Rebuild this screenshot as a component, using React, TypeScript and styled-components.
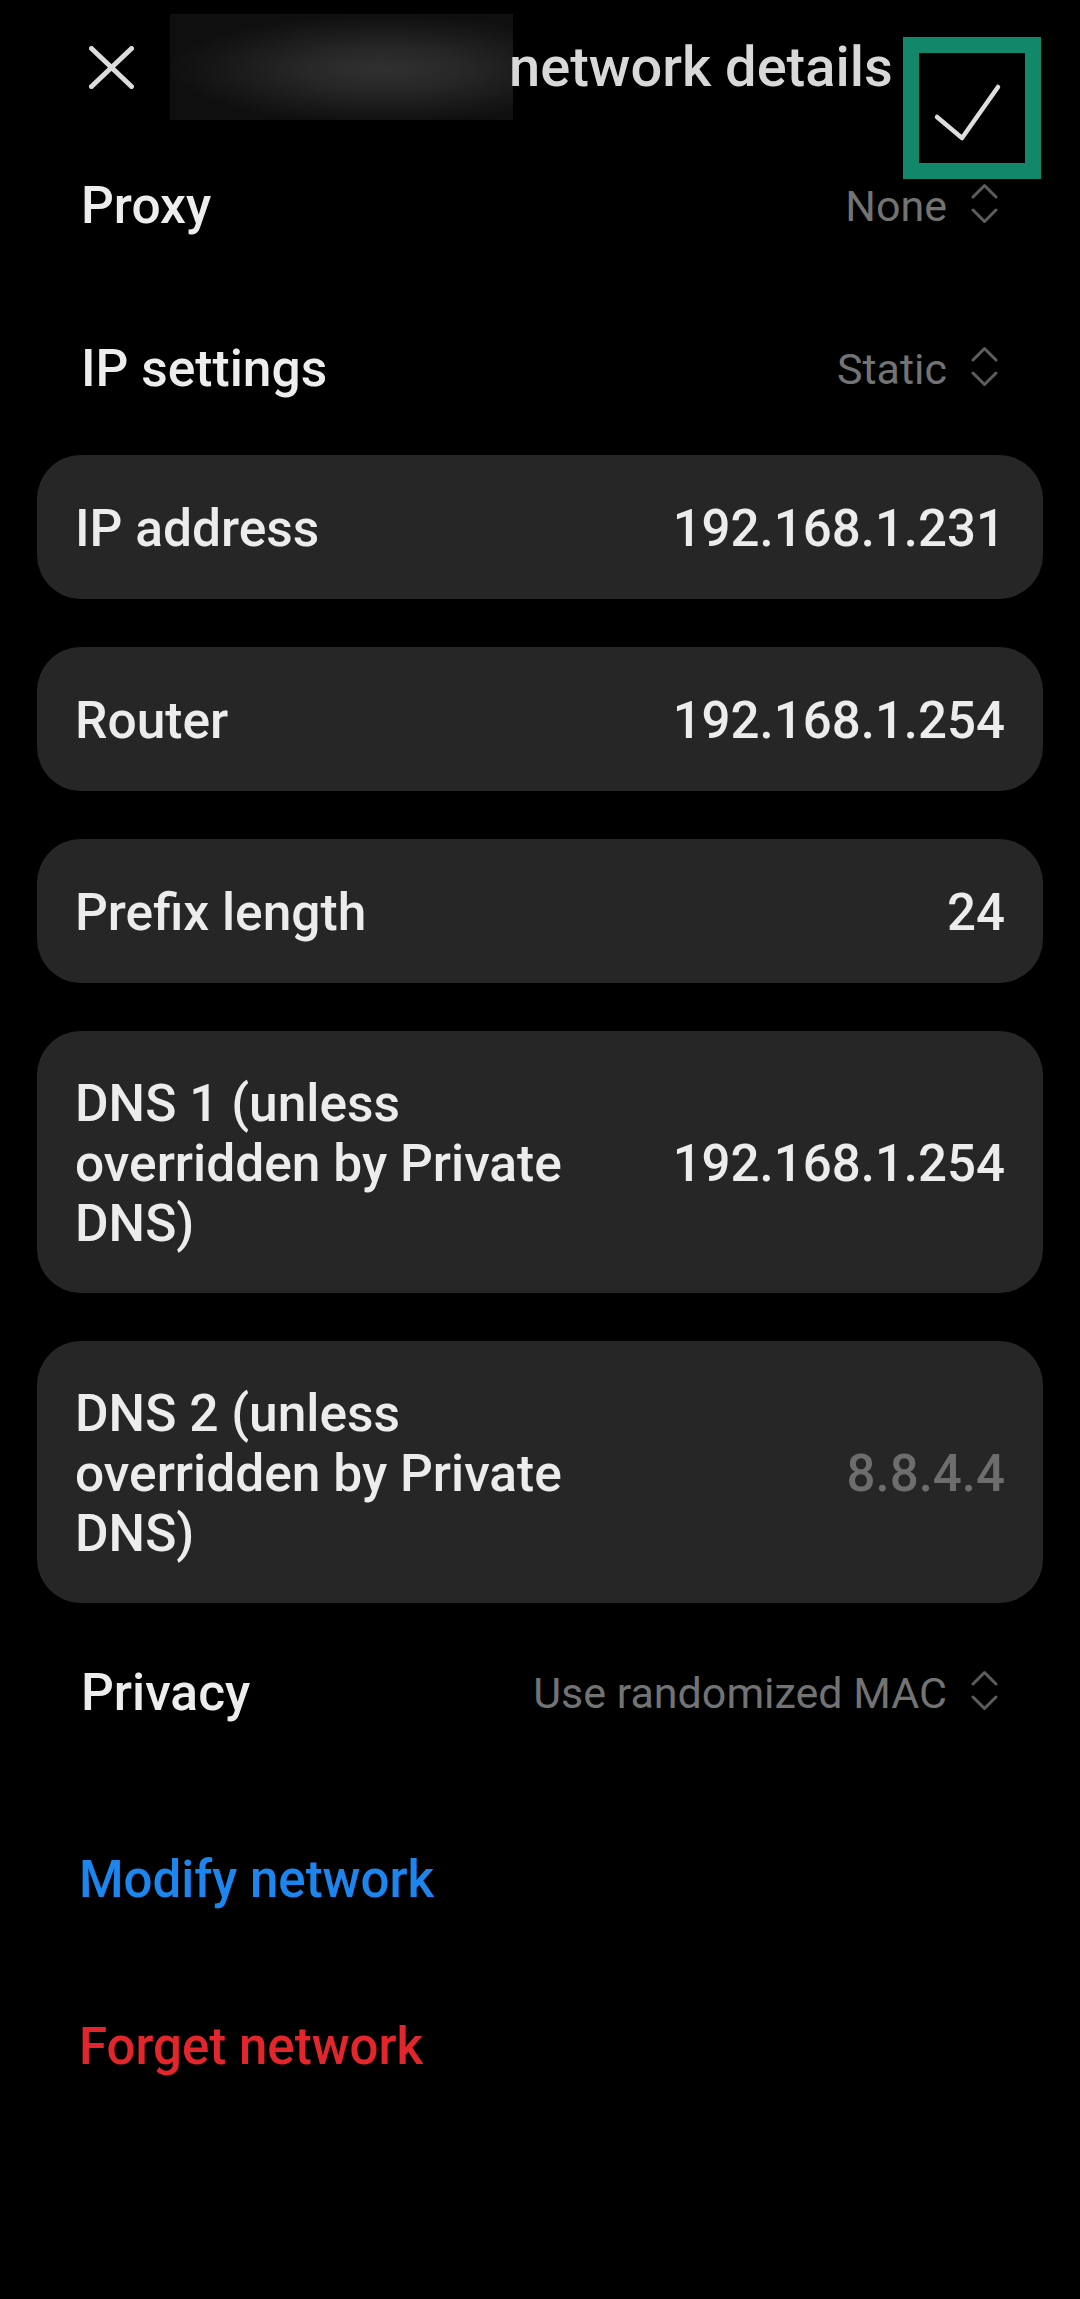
import React from "react";
import styled, { createGlobalStyle } from "styled-components";

const GlobalStyle = createGlobalStyle`
  html,
  body {
    margin: 0;
    padding: 0;
    background: #000;
  }

  body {
    font-family: Roboto, "Noto Sans", "Liberation Sans", sans-serif;
    -webkit-font-smoothing: antialiased;
  }
`;

const Page = styled.div`
  width: 1080px;
  min-height: 2299px;
  background: #000;
  color: #ececec;
`;

const Header = styled.header`
  position: relative;
  display: flex;
  align-items: center;
  box-sizing: border-box;
  height: 124px;
  padding: 10px 0 0 89px;
`;

const CloseIcon = styled.svg`
  flex-shrink: 0;
  width: 45px;
  height: 43px;
`;

// blurred network name
const Redacted = styled.div`
  flex-shrink: 0;
  width: 343px;
  height: 106px;
  margin-left: 36px;
  background: radial-gradient(
    ellipse 62% 52% at 62% 52%,
    #303030 0%,
    #282828 35%,
    #1a1a1a 70%,
    #0f0f0f 100%
  );
`;

const Title = styled.h1`
  margin: 0 0 0 -4px;
  font-size: 56px;
  font-weight: 500;
  line-height: 64px;
  color: #d8d8d8;
  white-space: nowrap;
`;

const SaveHighlight = styled.div`
  position: absolute;
  left: 903px;
  top: 37px;
  width: 138px;
  height: 142px;
  box-sizing: border-box;
  border: 16px solid #12876a;
  background: #000;
`;

const SelectRow = styled.div`
  display: flex;
  align-items: center;
  justify-content: space-between;
  height: 163px;
  padding: 0 82px 0 81px;
`;

const PrivacyRow = styled(SelectRow)`
  margin-top: 8px;
`;

const RowLabel = styled.span`
  font-size: 51.5px;
  font-weight: 500;
  color: #ededed;
`;

const RowValue = styled.span`
  display: flex;
  align-items: center;
  gap: 24px;
  font-size: 43px;
  color: #737373;
`;

const Chevrons = styled.svg`
  width: 27px;
  height: 41px;
  margin-top: -4px;
`;

const CardList = styled.div`
  display: flex;
  flex-direction: column;
  gap: 48px;
  margin-top: 5px;
  padding: 0 37px;
`;

const Card = styled.div`
  display: flex;
  align-items: center;
  justify-content: space-between;
  gap: 20px;
  box-sizing: border-box;
  min-height: 144px;
  padding: 43px 38px 39px;
  border-radius: 44px;
  background: #262626;
`;

const CardLabel = styled.span`
  flex: 0 1 520px;
  font-size: 51.5px;
  font-weight: 500;
  line-height: 60px;
  color: #ececec;
`;

const CardValue = styled.span<{ $muted?: boolean }>`
  flex-shrink: 0;
  font-size: 51px;
  font-weight: 500;
  line-height: 60px;
  white-space: nowrap;
  color: ${(p) => (p.$muted ? "#6d6d6d" : "#ececec")};
`;

const ActionList = styled.div`
  margin-top: 22px;
`;

const ActionRow = styled.div<{ $tone: "blue" | "red" }>`
  display: flex;
  align-items: center;
  height: 167px;
  padding-left: 79px;
  font-size: 51px;
  font-weight: 500;
  color: ${(p) => (p.$tone === "blue" ? "#1c85ee" : "#e2262c")};
`;

const UpDown = () => (
  <Chevrons viewBox="0 0 27 41">
    <path
      d="M2 14 L13.5 2.5 L25 14 M2 27 L13.5 38.5 L25 27"
      fill="none"
      stroke="#5c5c5c"
      strokeWidth="3"
      strokeLinecap="round"
      strokeLinejoin="round"
    />
  </Chevrons>
);

const fields = [
  { label: "IP address", value: "192.168.1.231" },
  { label: "Router", value: "192.168.1.254" },
  { label: "Prefix length", value: "24" },
  { label: "DNS 1 (unless overridden by Private DNS)", value: "192.168.1.254" },
  { label: "DNS 2 (unless overridden by Private DNS)", value: "8.8.4.4", muted: true },
];

const App: React.FC = () => {
  return (
    <Page>
      <GlobalStyle />
      <Header>
        <CloseIcon viewBox="0 0 45 43">
          <path
            d="M2.5 2.5 L42.5 40.5 M42.5 2.5 L2.5 40.5"
            stroke="#dcdcdc"
            strokeWidth="5"
            strokeLinecap="round"
          />
        </CloseIcon>
        <Redacted />
        <Title>network details</Title>
        <SaveHighlight>
          <svg width="106" height="110" viewBox="0 0 106 110">
            <path
              d="M18 64 L43 85 L79 34"
              fill="none"
              stroke="#dedede"
              strokeWidth="4.5"
              strokeLinecap="round"
              strokeLinejoin="round"
            />
          </svg>
        </SaveHighlight>
      </Header>

      <SelectRow>
        <RowLabel>Proxy</RowLabel>
        <RowValue>
          None
          <UpDown />
        </RowValue>
      </SelectRow>
      <SelectRow>
        <RowLabel>IP settings</RowLabel>
        <RowValue>
          Static
          <UpDown />
        </RowValue>
      </SelectRow>

      <CardList>
        {fields.map((f) => (
          <Card key={f.label}>
            <CardLabel>{f.label}</CardLabel>
            <CardValue $muted={f.muted}>{f.value}</CardValue>
          </Card>
        ))}
      </CardList>

      <PrivacyRow>
        <RowLabel>Privacy</RowLabel>
        <RowValue>
          Use randomized MAC
          <UpDown />
        </RowValue>
      </PrivacyRow>

      <ActionList>
        <ActionRow $tone="blue">Modify network</ActionRow>
        <ActionRow $tone="red">Forget network</ActionRow>
      </ActionList>
    </Page>
  );
};

export default App;
